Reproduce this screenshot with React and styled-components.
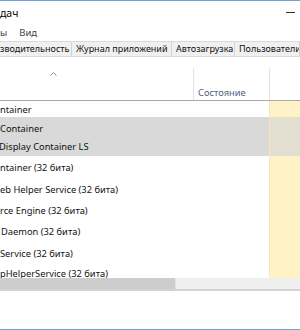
import React from "react";
import styled, { createGlobalStyle } from "styled-components";

const GlobalStyle = createGlobalStyle`
  html, body {
    margin: 0;
    padding: 0;
    background: #fff;
  }
  body {
    font-family: "Noto Sans", "DejaVu Sans", sans-serif;
    color: #111;
  }
`;

const rows = [
  { lines: ["ntainer"], height: 16 },
  { lines: ["Container", "Display Container LS"], height: 39, selected: true, shifts: [0, -1] },
  { lines: ["ntainer (32 бита)"], height: 21.4 },
  { lines: ["eb Helper Service (32 бита)"], height: 21.4 },
  { lines: ["rce Engine (32 бита)"], height: 21.4 },
  { lines: ["Daemon (32 бита)"], height: 21.4, shifts: [1] },
  { lines: ["Service (32 бита)"], height: 21.4, shifts: [0] },
  { lines: ["pHelperService (32 бита)"], height: 20 },
];

const App = () => {
  return (
    <>
      <GlobalStyle />
      <Window>
        <TitleBar>
          <Title>дач</Title>
          <Minimize />
        </TitleBar>
        <MenuBar>
          <MenuItem>ы</MenuItem>
          <MenuItem>Вид</MenuItem>
        </MenuBar>
        <TabStrip>
          <Tab $width={72}>зводительность</Tab>
          <Tab $width={100} $pad={4}>Журнал приложений</Tab>
          <Tab $width={63} $pad={4}>Автозагрузка</Tab>
          <Tab $pad={4}>Пользователи</Tab>
        </TabStrip>
        <Header>
          <HeaderCell $width={193}>
            <SortArrow viewBox="0 0 7 4" width="7" height="4">
              <path d="M0.5 3.5 L3.5 0.7 L6.5 3.5" fill="none" stroke="#8a8a8a" strokeWidth="1" />
            </SortArrow>
          </HeaderCell>
          <HeaderCell $width={76} $divider>
            <HeaderLabel>Состояние</HeaderLabel>
          </HeaderCell>
          <HeaderCell $divider />
        </Header>
        <Body>
          {rows.map((row, i) => (
            <Row key={i} style={{ height: row.height }} $selected={row.selected}>
              <NameCell>
                {row.lines.map((line, j) => (
                  <Name key={j} $shift={row.shifts ? row.shifts[j] : 0}>
                    {line}
                  </Name>
                ))}
              </NameCell>
              <HotCell $selected={row.selected} />
            </Row>
          ))}
        </Body>
        <ScrollBar>
          <Thumb />
        </ScrollBar>
        <Footer />
      </Window>
    </>
  );
};

const Window = styled.div`
  width: 300px;
  height: 330px;
  box-sizing: border-box;
  overflow: hidden;
  display: flex;
  flex-direction: column;
  border-top: 1px solid #6ea2d8;
  border-bottom: 1px solid #6ea2d8;
  background: #fff;
`;

const TitleBar = styled.div`
  height: 23px;
  flex: none;
  display: flex;
  align-items: center;
  justify-content: space-between;
  padding-right: 4px;
`;

const Title = styled.span`
  font-size: 10.5px;
  line-height: 1;
  margin-top: 1px;
  color: #000;
`;

const Minimize = styled.span`
  width: 9px;
  height: 1px;
  margin-right: 1px;
  background: #333;
`;

const MenuBar = styled.div`
  height: 17px;
  flex: none;
  display: flex;
  align-items: center;
  gap: 12px;
`;

const MenuItem = styled.span`
  font-size: 9.5px;
  color: #444;
`;

const TabStrip = styled.div`
  height: 16px;
  flex: none;
  display: flex;
  box-sizing: border-box;
  border-top: 1px solid #dadada;
  border-bottom: 1px solid #dadada;
  background: #f0f0f0;
`;

const Tab = styled.div`
  ${(p) => (p.$width ? `width: ${p.$width}px;` : "flex: 1;")}
  flex-shrink: 0;
  box-sizing: border-box;
  padding-left: ${(p) => p.$pad || 0}px;
  border-right: 1px solid #d4d4d4;
  font-size: 9px;
  line-height: 14px;
  white-space: nowrap;
  overflow: hidden;
  color: #111;
`;

const Header = styled.div`
  height: 44px;
  flex: none;
  display: flex;
  box-sizing: border-box;
  border-bottom: 1px solid #a9a9a9;
`;

const HeaderCell = styled.div`
  ${(p) => (p.$width ? `width: ${p.$width}px;` : "flex: 1;")}
  flex-shrink: 0;
  position: relative;
  box-sizing: border-box;
  display: flex;
  flex-direction: column;
  ${(p) =>
    p.$divider &&
    `
    &::before {
      content: "";
      position: absolute;
      left: 0;
      top: 11px;
      bottom: 0;
      width: 1px;
      background: #e3e3e3;
    }
  `}
`;

const SortArrow = styled.svg`
  display: block;
  margin: 15px 0 0 50px;
`;

const HeaderLabel = styled.span`
  margin-top: auto;
  margin-bottom: 1px;
  padding-left: 5px;
  font-size: 9.3px;
  color: #4c5f7d;
  white-space: nowrap;
`;

const Body = styled.div`
  height: 177px;
  flex: none;
  overflow: hidden;
  display: flex;
  flex-direction: column;
`;

const Row = styled.div`
  flex: none;
  display: flex;
  background: ${(p) => (p.$selected ? "#d9d9d9" : "#fff")};
`;

const NameCell = styled.div`
  width: 269px;
  flex: none;
  display: flex;
  flex-direction: column;
  justify-content: space-around;
  padding-top: 2px;
  box-sizing: border-box;
  overflow: hidden;
`;

const Name = styled.span`
  font-size: 9.3px;
  line-height: 1.2;
  white-space: pre;
  margin-left: ${(p) => p.$shift}px;
  color: #111;
`;

const HotCell = styled.div`
  flex: 1;
  background: ${(p) => (p.$selected ? "#e2dfd0" : "#fff2c6")};
  border-left: 1px solid #f4e6bb;
`;

const ScrollBar = styled.div`
  height: 13px;
  flex: none;
  display: flex;
  box-sizing: border-box;
  background: #efefef;
  border-bottom: 2px solid #d3d3d3;
`;

const Thumb = styled.div`
  width: 175px;
  background: #cdcdcd;
  border-right: 1px solid #e2e2e2;
`;

const Footer = styled.div`
  flex: 1;
  background: #fff;
`;

export default App;
